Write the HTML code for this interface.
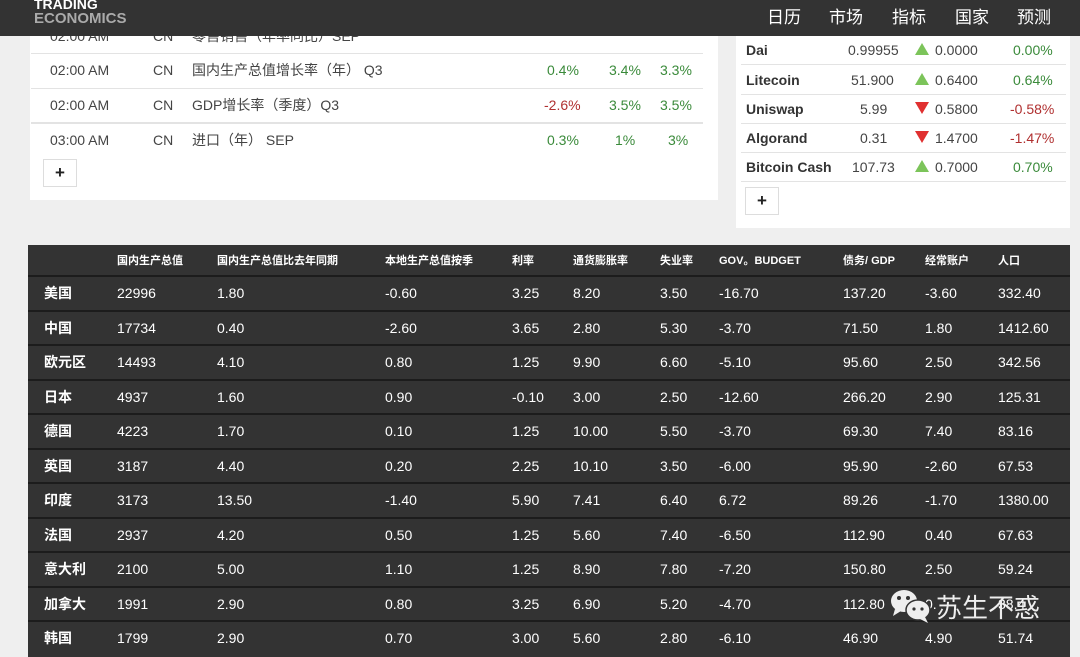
<!DOCTYPE html><html><head><meta charset="utf-8"><style>
body{margin:0;width:1080px;height:657px;overflow:hidden;background:#efefef;font-family:"Liberation Sans","Noto Sans CJK SC",sans-serif;position:relative}
.hdr{position:absolute;left:0;top:0;width:1080px;height:36px;background:#333;z-index:5}
.logo{position:absolute;left:34px;top:-3px;font-weight:bold;font-size:14px;line-height:14px;color:#fff}
.logo span{color:#aaa;font-size:15px}
.nav{position:absolute;top:7px;font-size:17px;line-height:22px;color:#fff}
.p1{position:absolute;left:30px;top:20px;width:688px;height:180px;background:#fff}
.p2{position:absolute;left:736px;top:20px;width:334px;height:208px;background:#fff}
.r{position:absolute;font-size:14px;line-height:16px;height:16px;color:#444;white-space:nowrap}
.g{color:#3a8a3a}.rd{color:#b03030}
.line{position:absolute;height:1px;background:#e3e3e3}
.btn{position:absolute;width:32px;height:26px;border:1px solid #ddd;background:#fff;font-weight:bold;font-size:17px;text-align:center;line-height:25px;color:#222}
.tb{position:absolute;left:28px;top:245px;width:1042px;height:412px;background:#333}
.c{position:absolute;color:#fff;font-size:14px;line-height:16px;height:16px;white-space:nowrap}
.h{font-size:11px;font-weight:bold}
.b{font-weight:bold}
.sep{position:absolute;left:0;width:1042px;height:2px;background:#1c1c1c}
.up{display:inline-block;width:0;height:0;border-left:7px solid transparent;border-right:7px solid transparent;border-bottom:12px solid #7cc45a;margin-right:6px}
.dn{display:inline-block;width:0;height:0;border-left:7px solid transparent;border-right:7px solid transparent;border-top:12px solid #e03030;margin-right:6px}
</style></head><body>
<div class="p1"></div>
<div class="r" style="left:50px;top:28px">02:00 AM</div><div class="r" style="left:153px;top:28px">CN</div><div class="r" style="left:192px;top:28px">零售销售（年率同比）SEP</div>
<div class="line" style="left:31px;top:53px;width:672px"></div>
<div class="r" style="left:50px;top:62px">02:00 AM</div><div class="r" style="left:153px;top:62px">CN</div><div class="r" style="left:192px;top:62px">国内生产总值增长率（年） Q3</div>
<div class="r g" style="left:547px;top:62px">0.4%</div><div class="r g" style="left:609px;top:62px">3.4%</div><div class="r g" style="left:660px;top:62px">3.3%</div>
<div class="line" style="left:31px;top:88px;width:672px"></div>
<div class="r" style="left:50px;top:97px">02:00 AM</div><div class="r" style="left:153px;top:97px">CN</div><div class="r" style="left:192px;top:97px">GDP增长率（季度）Q3</div>
<div class="r rd" style="left:544px;top:97px">-2.6%</div><div class="r g" style="left:609px;top:97px">3.5%</div><div class="r g" style="left:660px;top:97px">3.5%</div>
<div class="line" style="left:31px;top:122px;width:672px;height:2px"></div>
<div class="r" style="left:50px;top:132px">03:00 AM</div><div class="r" style="left:153px;top:132px">CN</div><div class="r" style="left:192px;top:132px">进口（年） SEP</div>
<div class="r g" style="left:547px;top:132px">0.3%</div><div class="r g" style="left:615px;top:132px">1%</div><div class="r g" style="left:668px;top:132px">3%</div>
<div class="btn" style="left:43px;top:159px">+</div>
<div class="hdr"><div class="logo">TRADING<br><span>ECONOMICS</span></div>
<div class="nav" style="left:767px">日历</div><div class="nav" style="left:829px">市场</div><div class="nav" style="left:892px">指标</div><div class="nav" style="left:955px">国家</div><div class="nav" style="left:1017px">预测</div></div>
<div class="p2"></div>
<div class="r b" style="left:746px;top:42px;color:#333">Dai</div><div class="r" style="left:848px;top:42px">0.99955</div><div class="r" style="left:915px;top:42px"><span class="up"></span>0.0000</div><div class="r g" style="left:1013px;top:42px">0.00%</div>
<div class="line" style="left:741px;top:64px;width:325px"></div>
<div class="r b" style="left:746px;top:72px;color:#333">Litecoin</div><div class="r" style="left:851px;top:72px">51.900</div><div class="r" style="left:915px;top:72px"><span class="up"></span>0.6400</div><div class="r g" style="left:1013px;top:72px">0.64%</div>
<div class="line" style="left:741px;top:94px;width:325px"></div>
<div class="r b" style="left:746px;top:101px;color:#333">Uniswap</div><div class="r" style="left:860px;top:101px">5.99</div><div class="r" style="left:915px;top:101px"><span class="dn"></span>0.5800</div><div class="r rd" style="left:1010px;top:101px">-0.58%</div>
<div class="line" style="left:741px;top:123px;width:325px"></div>
<div class="r b" style="left:746px;top:130px;color:#333">Algorand</div><div class="r" style="left:860px;top:130px">0.31</div><div class="r" style="left:915px;top:130px"><span class="dn"></span>1.4700</div><div class="r rd" style="left:1010px;top:130px">-1.47%</div>
<div class="line" style="left:741px;top:152px;width:325px"></div>
<div class="r b" style="left:746px;top:159px;color:#333">Bitcoin Cash</div><div class="r" style="left:852px;top:159px">107.73</div><div class="r" style="left:915px;top:159px"><span class="up"></span>0.7000</div><div class="r g" style="left:1013px;top:159px">0.70%</div>
<div class="line" style="left:741px;top:181px;width:325px"></div>
<div class="btn" style="left:745px;top:187px">+</div>
<div class="tb" id="tb"></div>
<script>
var cols=[16,89,189,357,484,545,632,691,815,897,970];
var hd=["","国内生产总值","国内生产总值比去年同期","本地生产总值按季","利率","通货膨胀率","失业率","GOV。BUDGET","债务/ GDP","经常账户","人口"];
var rows=[["美国","22996","1.80","-0.60","3.25","8.20","3.50","-16.70","137.20","-3.60","332.40"],
["中国","17734","0.40","-2.60","3.65","2.80","5.30","-3.70","71.50","1.80","1412.60"],
["欧元区","14493","4.10","0.80","1.25","9.90","6.60","-5.10","95.60","2.50","342.56"],
["日本","4937","1.60","0.90","-0.10","3.00","2.50","-12.60","266.20","2.90","125.31"],
["德国","4223","1.70","0.10","1.25","10.00","5.50","-3.70","69.30","7.40","83.16"],
["英国","3187","4.40","0.20","2.25","10.10","3.50","-6.00","95.90","-2.60","67.53"],
["印度","3173","13.50","-1.40","5.90","7.41","6.40","6.72","89.26","-1.70","1380.00"],
["法国","2937","4.20","0.50","1.25","5.60","7.40","-6.50","112.90","0.40","67.63"],
["意大利","2100","5.00","1.10","1.25","8.90","7.80","-7.20","150.80","2.50","59.24"],
["加拿大","1991","2.90","0.80","3.25","6.90","5.20","-4.70","112.80","0.","38.4"],
["韩国","1799","2.90","0.70","3.00","5.60","2.80","-6.10","46.90","4.90","51.74"]];
var t=document.getElementById('tb'),h='';
hd.forEach(function(x,i){h+='<div class="c h" style="left:'+cols[i]+'px;top:8px">'+x+'</div>'});
rows.forEach(function(r,j){var y=31+j*34.5;h+='<div class="sep" style="top:'+(y-1)+'px"></div>';
r.forEach(function(x,i){h+='<div class="c'+(i==0?' b':'')+'" style="left:'+cols[i]+'px;top:'+(y+9)+'px">'+x+'</div>'})});
t.innerHTML=h;
</script>
<svg style="position:absolute;left:887px;top:587px" width="60" height="40" viewBox="0 0 60 40"><ellipse cx="17" cy="14" rx="13" ry="11" fill="#eee"/><path d="M8 22 L6 29 L14 24Z" fill="#eee"/><ellipse cx="31" cy="23" rx="12" ry="10" fill="#eee" stroke="#333" stroke-width="1.5"/><path d="M38 30 L41 36 L33 32Z" fill="#eee"/><circle cx="12" cy="11" r="2" fill="#333"/><circle cx="21" cy="11" r="2" fill="#333"/><circle cx="27" cy="22" r="1.6" fill="#333"/><circle cx="35" cy="22" r="1.6" fill="#333"/></svg>
<div style="position:absolute;left:936px;top:589px;font-size:26px;line-height:36px;color:#eee;font-family:'Noto Sans CJK SC',sans-serif">苏生不惑</div>
</body></html>
